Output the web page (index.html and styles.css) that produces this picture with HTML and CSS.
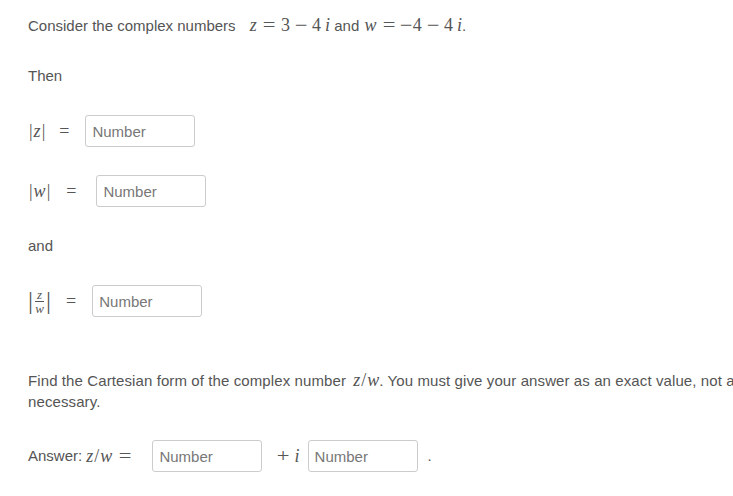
FILE: index.html
```html
<!DOCTYPE html>
<html lang="en">
<head>
<meta charset="utf-8">
<title>Complex numbers</title>
<link rel="stylesheet" href="styles.css">
</head>
<body>
<div class="page">
  <p class="text p-intro">Consider the complex numbers <span class="math gap-l"><i>z</i><span class="op">=</span>3<span class="bin">−</span>4<i class="ii">i</i></span> and <span class="math gap-s"><i>w</i><span class="op">=</span><span class="neg">−</span>4<span class="bin">−</span>4<i class="ii">i</i></span>.</p>

  <p class="text p-then">Then</p>

  <div class="row row-z">
    <span class="math"><span class="bar">|</span><i>z</i><span class="bar">|</span></span>
    <span class="math eq">=</span>
    <input class="num" type="text" placeholder="Number">
  </div>

  <div class="row row-w">
    <span class="math"><span class="bar">|</span><i>w</i><span class="bar">|</span></span>
    <span class="math eq">=</span>
    <input class="num" type="text" placeholder="Number">
  </div>

  <p class="text p-and">and</p>

  <div class="row row-q">
    <span class="math absfrac"><span class="bar tall">|</span><span class="frac"><i class="fn">z</i><i class="fd">w</i></span><span class="bar tall">|</span></span>
    <span class="math eq">=</span>
    <input class="num" type="text" placeholder="Number">
  </div>

  <p class="text p-find">Find the Cartesian form of the complex number <span class="math zw"><i>z</i><span class="sl">/</span><i>w</i></span>. You must give your answer as an exact value, not as a decimal approximation, where necessary.</p>

  <div class="row row-ans">
    <span class="text">Answer:</span>
    <span class="math ans-math"><i>z</i><span class="sl">/</span><i>w</i><span class="op">=</span></span>
    <input class="num" type="text" placeholder="Number">
    <span class="math plus-i"><span class="pl">+</span><i class="ii">i</i></span>
    <input class="num" type="text" placeholder="Number">
    <span class="text dot">.</span>
  </div>
</div>
</body>
</html>
```

FILE: styles.css
```css
html, body {
  margin: 0;
  padding: 0;
  overflow: hidden;
  background: #ffffff;
}
body {
  font-family: "Liberation Sans", Arial, sans-serif;
  font-size: 15px;
  color: #555555;
}
.page {
  width: 1000px;
  padding: 15px 0 0 28px;
}
.text {
  margin: 0;
  line-height: 20px;
}
.math {
  font-family: "Liberation Serif", "DejaVu Serif", serif;
  font-size: 18px;
  color: #555555;
  white-space: nowrap;
}
.math i {
  font-style: italic;
}
.gap-l { margin-left: 10px; }
.gap-s { margin-left: 1px; }
.op, .bin, .neg, .pl {
  display: inline-block;
  transform: scaleX(1.25);
}
.op { margin: 0 7px; }
.bin { margin: 0 6px; }
.neg { margin-right: 2px; }
.ii { margin-left: 4px; }

.p-then { margin-top: 30px; }
.p-and { margin-top: 29px; }
.p-find {
  margin-top: 53px;
  line-height: 21px;
  width: 960px;
  letter-spacing: 0.1px;
}
.zw { margin-left: 3px; letter-spacing: 0; }
.sl { margin: 0 1px; }

.row {
  display: flex;
  align-items: center;
  height: 32px;
}
.row-z { margin-top: 29px; }
.row-w { margin-top: 28px; }
.row-q { margin-top: 29px; }
.row-ans { margin-top: 28px; }

.bar { color: #555; margin: 0 1px; }
.eq { margin: 0 16px 0 13px; }
.row-w .eq { margin: 0 20px 0 15px; }
.row-q .eq { margin: 0 16px 0 15px; }

.absfrac {
  display: inline-flex;
  align-items: center;
}
.bar.tall {
  font-size: 25px;
  line-height: 24px;
  margin: 0;
}
.frac {
  display: inline-flex;
  flex-direction: column;
  align-items: center;
  font-size: 13px;
  line-height: 11px;
  margin: 0 2px;
}
.fn {
  border-bottom: 1px solid #555;
  padding: 0 2px 1px;
}
.fd { padding-top: 1px; }

.num {
  box-sizing: border-box;
  width: 110px;
  height: 32px;
  border: 1px solid #cccccc;
  border-radius: 3px;
  padding: 0 6px;
  font-family: "Liberation Sans", Arial, sans-serif;
  font-size: 15px;
  color: #555;
  background: #fff;
  margin: 0;
}
.num::placeholder {
  color: #777777;
  opacity: 1;
}

.ans-math { margin-left: 4px; margin-right: 22px; }
.ans-math .op { margin: 0 0 0 8px; }
.plus-i { margin: 0 8px 0 16px; }
.plus-i .ii { margin-left: 6px; }
.dot { margin-left: 10px; }
```
